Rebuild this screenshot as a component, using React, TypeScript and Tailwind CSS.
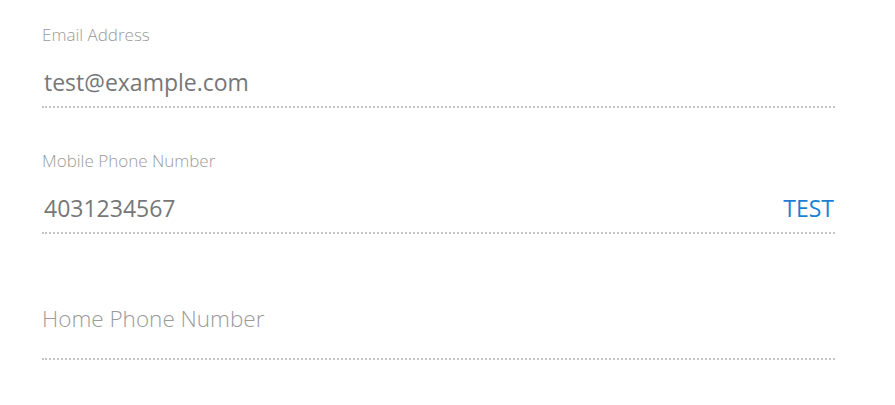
import * as React from 'react';

const fields = [
  { label: 'Email Address', value: 'test@example.com', action: '' },
  { label: 'Mobile Phone Number', value: '4031234567', action: 'TEST' },
  { label: 'Home Phone Number', value: '', action: '' },
];

function Field({ label, value, action }: (typeof fields)[0]) {
  const filled = value !== '';
  return (
    <div className="flex flex-col">
      <div className="h-[20px] text-[17px] leading-[20px] font-light text-[#9a9a9a]">{filled ? label : ''}</div>
      {filled ? (
        <div className="mt-[22px] flex items-center justify-between pl-[2px] pr-[3px] pb-[9px] border-b-2 border-dotted border-[#c4c4c4]">
          <span className="text-[23px] leading-[30px] text-[#777777]">{value}</span>
          {action && <span className="mr-[-2px] text-[23px] leading-[30px] text-[#1a7fd4]">{action}</span>}
        </div>
      ) : (
        <div className="mt-[7px] pb-[24px] border-b-2 border-dotted border-[#c4c4c4]">
          <span className="text-[22.5px] leading-[30px] font-light text-[#9a9a9a]">{label}</span>
        </div>
      )}
    </div>
  );
}

export default function App() {
  return (
    <div className="min-h-screen bg-white pt-[25px] pl-[42px] pr-[60px]" style={{ fontFamily: '"Open Sans", sans-serif' }}>
      <div className="flex flex-col gap-[43px]">
        {fields.map((f) => (
          <Field key={f.label} {...f} />
        ))}
      </div>
    </div>
  );
}
